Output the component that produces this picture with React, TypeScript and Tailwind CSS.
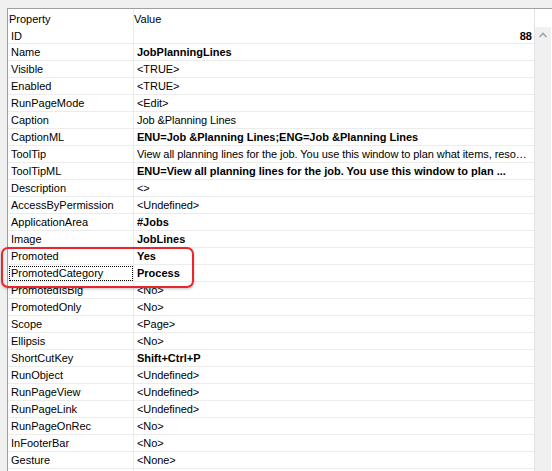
import React from 'react';

type Row = { name: string; value: string; bold?: boolean; focused?: boolean };

const rows: Row[] = [
  { name: 'Name', value: 'JobPlanningLines', bold: true },
  { name: 'Visible', value: '<TRUE>' },
  { name: 'Enabled', value: '<TRUE>' },
  { name: 'RunPageMode', value: '<Edit>' },
  { name: 'Caption', value: 'Job &Planning Lines' },
  { name: 'CaptionML', value: 'ENU=Job &Planning Lines;ENG=Job &Planning Lines', bold: true },
  { name: 'ToolTip', value: 'View all planning lines for the job. You use this window to plan what items, reso\u2026' },
  { name: 'ToolTipML', value: 'ENU=View all planning lines for the job. You use this window to plan ...', bold: true },
  { name: 'Description', value: '<>' },
  { name: 'AccessByPermission', value: '<Undefined>' },
  { name: 'ApplicationArea', value: '#Jobs', bold: true },
  { name: 'Image', value: 'JobLines', bold: true },
  { name: 'Promoted', value: 'Yes', bold: true },
  { name: 'PromotedCategory', value: 'Process', bold: true, focused: true },
  { name: 'PromotedIsBig', value: '<No>' },
  { name: 'PromotedOnly', value: '<No>' },
  { name: 'Scope', value: '<Page>' },
  { name: 'Ellipsis', value: '<No>' },
  { name: 'ShortCutKey', value: 'Shift+Ctrl+P', bold: true },
  { name: 'RunObject', value: '<Undefined>' },
  { name: 'RunPageView', value: '<Undefined>' },
  { name: 'RunPageLink', value: '<Undefined>' },
  { name: 'RunPageOnRec', value: '<No>' },
  { name: 'InFooterBar', value: '<No>' },
  { name: 'Gesture', value: '<None>' },
  { name: '', value: '' },
];

export default function App() {
  return (
    <div
      className="relative w-[552px] h-[471px] overflow-hidden bg-[#f0f0f0] pt-[8px] pl-[7px] text-[11px] text-black"
      style={{ fontFamily: '"Liberation Sans", Arial, sans-serif' }}
    >
      <div className="flex h-full border-t border-l border-[#a0a0a0] bg-white">
        {/* grid */}
        <div className="w-[527px] border-r border-[#e3e3e3] flex flex-col">
          <div className="flex h-[18px] shrink-0">
            <div className="w-[126px] border-r border-[#ececec] pl-[1px] leading-[18px] pt-[1px]">Property</div>
            <div className="flex-1 leading-[18px] pt-[1px]">Value</div>
          </div>
          <div className="flex h-[17px] shrink-0 border-b border-[#ececec] overflow-hidden">
            <div className="w-[126px] border-r border-[#ececec] pl-[3px] pt-[1px] leading-[16px]">ID</div>
            <div className="flex-1 pr-[2px] pt-[1px] text-right font-bold leading-[16px]">88</div>
          </div>
          {rows.map((r, i) => (
            <div key={i} className="flex h-[17px] shrink-0 border-b border-[#ececec]">
              <div className="relative w-[126px] border-r border-[#ececec] pl-[3px] pt-[1px] leading-[15px] whitespace-nowrap overflow-hidden">
                {r.name}
                {r.focused && (
                  <div className="absolute left-[1px] right-0 top-[1px] bottom-0 border border-dotted border-black" />
                )}
              </div>
              <div
                className={`flex-1 pl-[3px] pt-[1px] leading-[15px] whitespace-nowrap overflow-hidden ${r.bold ? 'font-bold' : 'tracking-[-0.07px]'}`}
              >
                {r.value}
              </div>
            </div>
          ))}
        </div>
        {/* scrollbar */}
        <div className="w-[16px] flex flex-col">
          <div className="h-[18px] bg-white shrink-0" />
          <div className="flex-1 bg-[#f0f0f0] flex flex-col items-center">
            <svg width="10" height="8" viewBox="0 0 10 8" className="mt-[4px]">
              <path d="M1.5 6 L5 2.5 L8.5 6" fill="none" stroke="#a6a6a6" strokeWidth="1.6" />
            </svg>
          </div>
        </div>
      </div>
      {/* highlight */}
      <div className="absolute left-[1px] top-[247px] w-[193px] h-[41px] rounded-[7px] border-2 border-[#e8262b] shadow-[0_1px_3px_rgba(0,0,0,0.25)]" />
    </div>
  );
}
